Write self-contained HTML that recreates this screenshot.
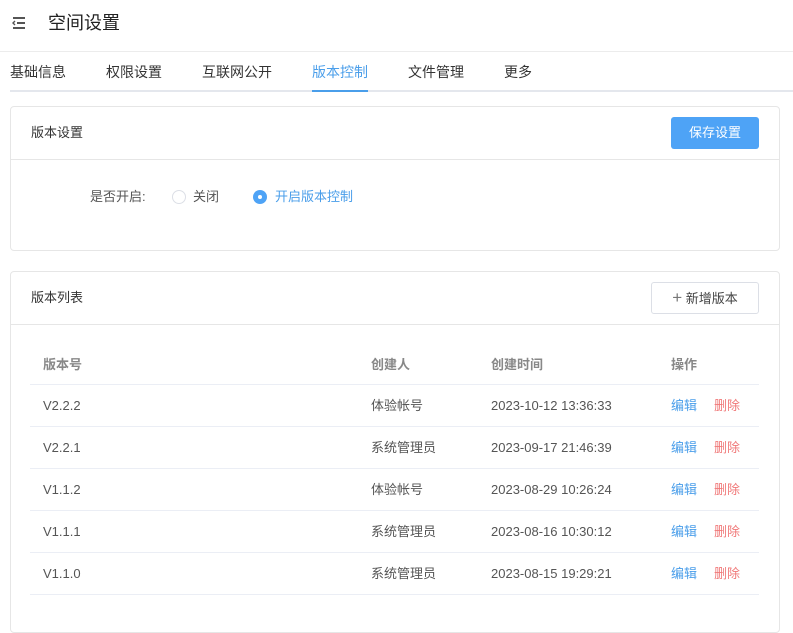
<html><head><style>
body{margin:0;width:793px;height:615px;overflow:hidden;background:#fff;font-family:"Liberation Sans","Noto Sans CJK SC",sans-serif;color:#333;position:relative}
.a{position:absolute;white-space:nowrap;line-height:18px}
.card{position:absolute;left:10px;width:768px;border:1px solid #e6e6e6;border-radius:4px;background:#fff}
.t{font-size:13px;color:#555}
</style></head><body>
<svg class="a" style="left:12px;top:17px" width="14" height="12" viewBox="0 0 14 12"><g stroke="#555" stroke-width="2"><line x1="1" y1="1" x2="13" y2="1"/><line x1="5" y1="6" x2="13" y2="6"/><line x1="1" y1="11" x2="13" y2="11"/></g><path d="M3 4 L1 6 L3 8" stroke="#555" fill="none" stroke-width="1.4"/></svg>
<div class="a" style="left:48px;top:12px;font-size:18px;line-height:22px;color:#222">空间设置</div>
<div class="a" style="left:0;top:51px;width:793px;height:1px;background:#ececec"></div>
<div class="a" style="left:10px;top:63px;font-size:14px;color:#333">基础信息</div>
<div class="a" style="left:106px;top:63px;font-size:14px;color:#333">权限设置</div>
<div class="a" style="left:202px;top:63px;font-size:14px;color:#333">互联网公开</div>
<div class="a" style="left:312px;top:63px;font-size:14px;color:#4a9eea">版本控制</div>
<div class="a" style="left:408px;top:63px;font-size:14px;color:#333">文件管理</div>
<div class="a" style="left:504px;top:63px;font-size:14px;color:#333">更多</div>
<div class="a" style="left:10px;top:90px;width:783px;height:2px;background:#e4e7ed"></div>
<div class="a" style="left:312px;top:90px;width:56px;height:2px;background:#4a9eea"></div>

<div class="card" style="top:106px;height:143px">
<div class="a t" style="left:20px;top:17px;color:#333">版本设置</div>
<div class="a" style="left:660px;top:10px;width:88px;height:32px;background:#4ea3f6;border-radius:3px;color:#fff;font-size:13px;line-height:32px;text-align:center">保存设置</div>
<div class="a" style="left:0;top:52px;width:768px;height:1px;background:#e6e6e6"></div>
<div class="a t" style="left:79px;top:81px">是否开启:</div>
<div class="a" style="left:161px;top:83px;width:12px;height:12px;border:1px solid #dcdfe6;border-radius:50%"></div>
<div class="a t" style="left:182px;top:81px">关闭</div>
<div class="a" style="left:242px;top:83px;width:14px;height:14px;border-radius:50%;background:#4ea3f6"></div>
<div class="a" style="left:247px;top:88px;width:4px;height:4px;border-radius:50%;background:#fff"></div>
<div class="a t" style="left:264px;top:81px;color:#4a9eea">开启版本控制</div>
</div>

<div class="card" style="top:271px;height:360px">
<div class="a t" style="left:20px;top:17px;color:#333">版本列表</div>
<div class="a" style="left:640px;top:10px;width:106px;height:30px;border:1px solid #dcdfe6;border-radius:3px;color:#444;font-size:13px;line-height:30px;text-align:center"><span style="font-size:17px;color:#777">+</span> 新增版本</div>
<div class="a" style="left:0;top:52px;width:768px;height:1px;background:#e6e6e6"></div>
</div>
<div class="a t" style="left:43px;top:356px;color:#888;font-weight:bold">版本号</div>
<div class="a t" style="left:371px;top:356px;color:#888;font-weight:bold">创建人</div>
<div class="a t" style="left:491px;top:356px;color:#888;font-weight:bold">创建时间</div>
<div class="a t" style="left:671px;top:356px;color:#888;font-weight:bold">操作</div>
<div class="a" style="left:30px;top:384px;width:729px;height:1px;background:#ebeef5"></div>

<div class="a t" style="left:43px;top:397px">V2.2.2</div><div class="a t" style="left:371px;top:397px">体验帐号</div><div class="a t" style="left:491px;top:397px">2023-10-12 13:36:33</div><div class="a t" style="left:671px;top:397px;color:#4a9eea">编辑</div><div class="a t" style="left:714px;top:397px;color:#f07878">删除</div>
<div class="a" style="left:30px;top:426px;width:729px;height:1px;background:#ebeef5"></div>
<div class="a t" style="left:43px;top:439px">V2.2.1</div><div class="a t" style="left:371px;top:439px">系统管理员</div><div class="a t" style="left:491px;top:439px">2023-09-17 21:46:39</div><div class="a t" style="left:671px;top:439px;color:#4a9eea">编辑</div><div class="a t" style="left:714px;top:439px;color:#f07878">删除</div>
<div class="a" style="left:30px;top:468px;width:729px;height:1px;background:#ebeef5"></div>
<div class="a t" style="left:43px;top:481px">V1.1.2</div><div class="a t" style="left:371px;top:481px">体验帐号</div><div class="a t" style="left:491px;top:481px">2023-08-29 10:26:24</div><div class="a t" style="left:671px;top:481px;color:#4a9eea">编辑</div><div class="a t" style="left:714px;top:481px;color:#f07878">删除</div>
<div class="a" style="left:30px;top:510px;width:729px;height:1px;background:#ebeef5"></div>
<div class="a t" style="left:43px;top:523px">V1.1.1</div><div class="a t" style="left:371px;top:523px">系统管理员</div><div class="a t" style="left:491px;top:523px">2023-08-16 10:30:12</div><div class="a t" style="left:671px;top:523px;color:#4a9eea">编辑</div><div class="a t" style="left:714px;top:523px;color:#f07878">删除</div>
<div class="a" style="left:30px;top:552px;width:729px;height:1px;background:#ebeef5"></div>
<div class="a t" style="left:43px;top:565px">V1.1.0</div><div class="a t" style="left:371px;top:565px">系统管理员</div><div class="a t" style="left:491px;top:565px">2023-08-15 19:29:21</div><div class="a t" style="left:671px;top:565px;color:#4a9eea">编辑</div><div class="a t" style="left:714px;top:565px;color:#f07878">删除</div>
<div class="a" style="left:30px;top:594px;width:729px;height:1px;background:#ebeef5"></div>
</body></html>
